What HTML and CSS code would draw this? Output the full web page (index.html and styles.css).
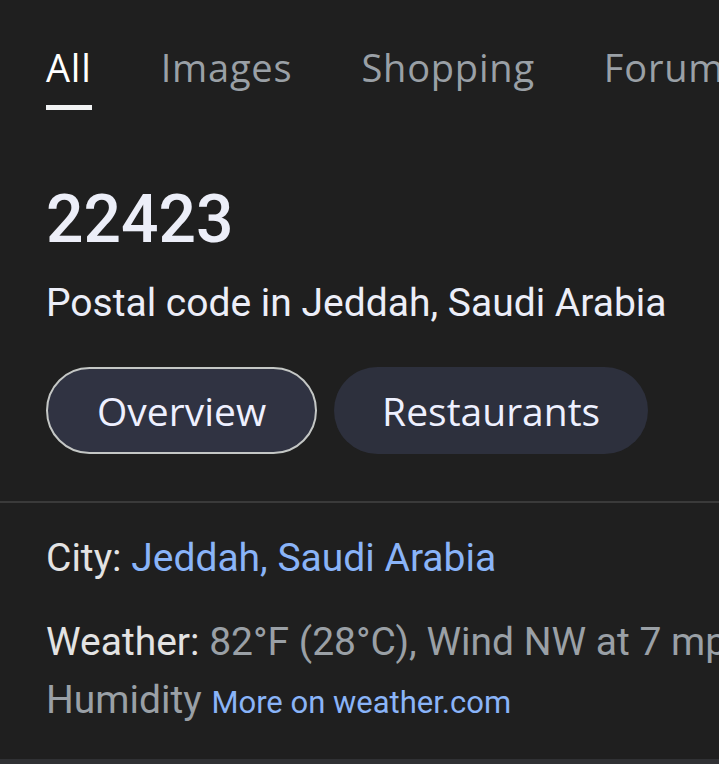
FILE: index.html
```html
<!DOCTYPE html>
<html lang="en">
<head>
  <meta charset="UTF-8" />
  <meta name="viewport" content="width=device-width, initial-scale=1.0"/>
  <title>22423 - Search</title>
  <link rel="stylesheet" href="styles.css">
</head>
<body>
  <nav class="tabs">
    <a class="tab active" href="#">All</a>
    <a class="tab" href="#">Images</a>
    <a class="tab" href="#">Shopping</a>
    <a class="tab" href="#">Forums</a>
  </nav>

  <section class="header">
    <h1 class="title">22423</h1>
    <div class="subtitle">Postal code in Jeddah, Saudi Arabia</div>
    <div class="chips">
      <button class="chip selected">Overview</button>
      <button class="chip">Restaurants</button>
    </div>
  </section>

  <section class="facts">
    <div class="fact">
      <span class="label">City:</span>
      <a class="link" href="#">Jeddah, Saudi Arabia</a>
    </div>
    <div class="fact weather">
      <span class="label">Weather:</span>
      <span class="value">82°F (28°C), Wind NW at 7 mph (11 km/h), 62%</span>
    </div>
    <div class="fact">
      <span class="value">Humidity</span>
      <a class="link small" href="#">More on weather.com</a>
    </div>
  </section>
</body>
</html>
```

FILE: styles.css
```css
* {
  box-sizing: border-box;
}

body {
  margin: 0;
  background: #1f1f1f;
  font-family: Roboto, 'Noto Sans', sans-serif;
  color: #e3e3e3;
  overflow: hidden;
  min-height: 764px;
  border-bottom: 5px solid #303134;
}

a {
  text-decoration: none;
}

.tabs {
  display: flex;
  gap: 69px;
  padding: 43px 0 0 46px;
  white-space: nowrap;
}

.tab {
  font-family: 'Open Sans', Lato, sans-serif;
  font-size: 38px;
  line-height: 48px;
  letter-spacing: 0.8px;
  color: #9aa0a6;
  padding-bottom: 14px;
  border-bottom: 5px solid transparent;
}

.tab.active {
  color: #ffffff;
  border-bottom-color: #f1f3f4;
}

.header {
  padding: 0 46px 47px;
  border-bottom: 2px solid #3a3a3a;
}

.title {
  margin: 0;
  padding-top: 80px;
  font-size: 66px;
  font-weight: 500;
  line-height: 60px;
  color: #eceef8;
}

.subtitle {
  margin-top: 31px;
  font-size: 39px;
  line-height: 44px;
  color: #eceef8;
}

.chips {
  display: flex;
  gap: 17px;
  margin-top: 42px;
}

.chip {
  font-family: 'Open Sans', Lato, sans-serif;
  font-size: 39px;
  height: 87px;
  padding: 0 46px;
  border-radius: 44px;
  border: 2px solid transparent;
  background: #2d303d;
  color: #eef0ff;
}

.chip.selected {
  padding: 0 49px;
  border-color: #c4c7c5;
  background: #303342;
}

.facts {
  padding: 26px 0 0 46px;
  white-space: nowrap;
}

.fact {
  font-size: 39px;
  line-height: 58px;
}

.weather {
  margin-top: 26px;
}

.label {
  color: #e3e3e3;
}

.value {
  color: #9aa0a6;
}

.link {
  color: #8ab4f8;
}

.link.small {
  font-size: 31px;
}
```
